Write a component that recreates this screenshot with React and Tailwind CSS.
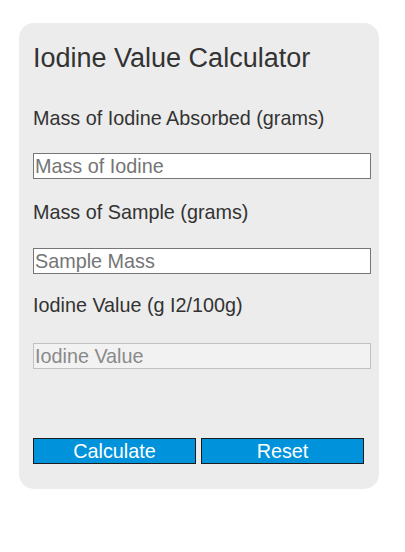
export default function App() {
  return (
    <div className="w-[405px] h-[552px] bg-white pt-[23px] pl-[19px]" style={{ fontFamily: '"Liberation Sans", Arial, sans-serif' }}>
      <div className="w-[360px] h-[466px] bg-[#ececec] rounded-[15px] pt-[21px] pl-[14px] pr-[8px] text-[#333333] flex flex-col">
        <div className="text-[27px] leading-[28px]">Iodine Value Calculator</div>
        <div className="mt-[36px] text-[19.8px] leading-[21px]">Mass of Iodine Absorbed (grams)</div>
        <input className="mt-[24px] h-[26px] w-full bg-white border border-[#767676] px-[1px] text-[19.8px] leading-[21px] outline-none placeholder:text-[#757575]" placeholder="Mass of Iodine" />
        <div className="mt-[23px] text-[19.8px] leading-[21px]">Mass of Sample (grams)</div>
        <input className="mt-[25px] h-[26px] w-full bg-white border border-[#767676] px-[1px] text-[19.8px] leading-[21px] outline-none placeholder:text-[#757575]" placeholder="Sample Mass" />
        <div className="mt-[21px] text-[19.8px] leading-[21px]">Iodine Value (g I2/100g)</div>
        <input readOnly className="mt-[27px] h-[26px] w-full bg-[#f2f2f2] border border-[#c2c2c2] px-[1px] text-[19.8px] leading-[21px] outline-none placeholder:text-[#8a8a8a]" placeholder="Iodine Value" />
        <div className="mt-[69px] flex gap-[5px]">
          <button className="w-[163px] h-[26px] bg-[#0093dc] border border-[#1c1c1c] text-white text-[19.8px] leading-[21px]">Calculate</button>
          <button className="w-[163px] h-[26px] bg-[#0093dc] border border-[#1c1c1c] text-white text-[19.8px] leading-[21px]">Reset</button>
        </div>
      </div>
    </div>
  );
}
